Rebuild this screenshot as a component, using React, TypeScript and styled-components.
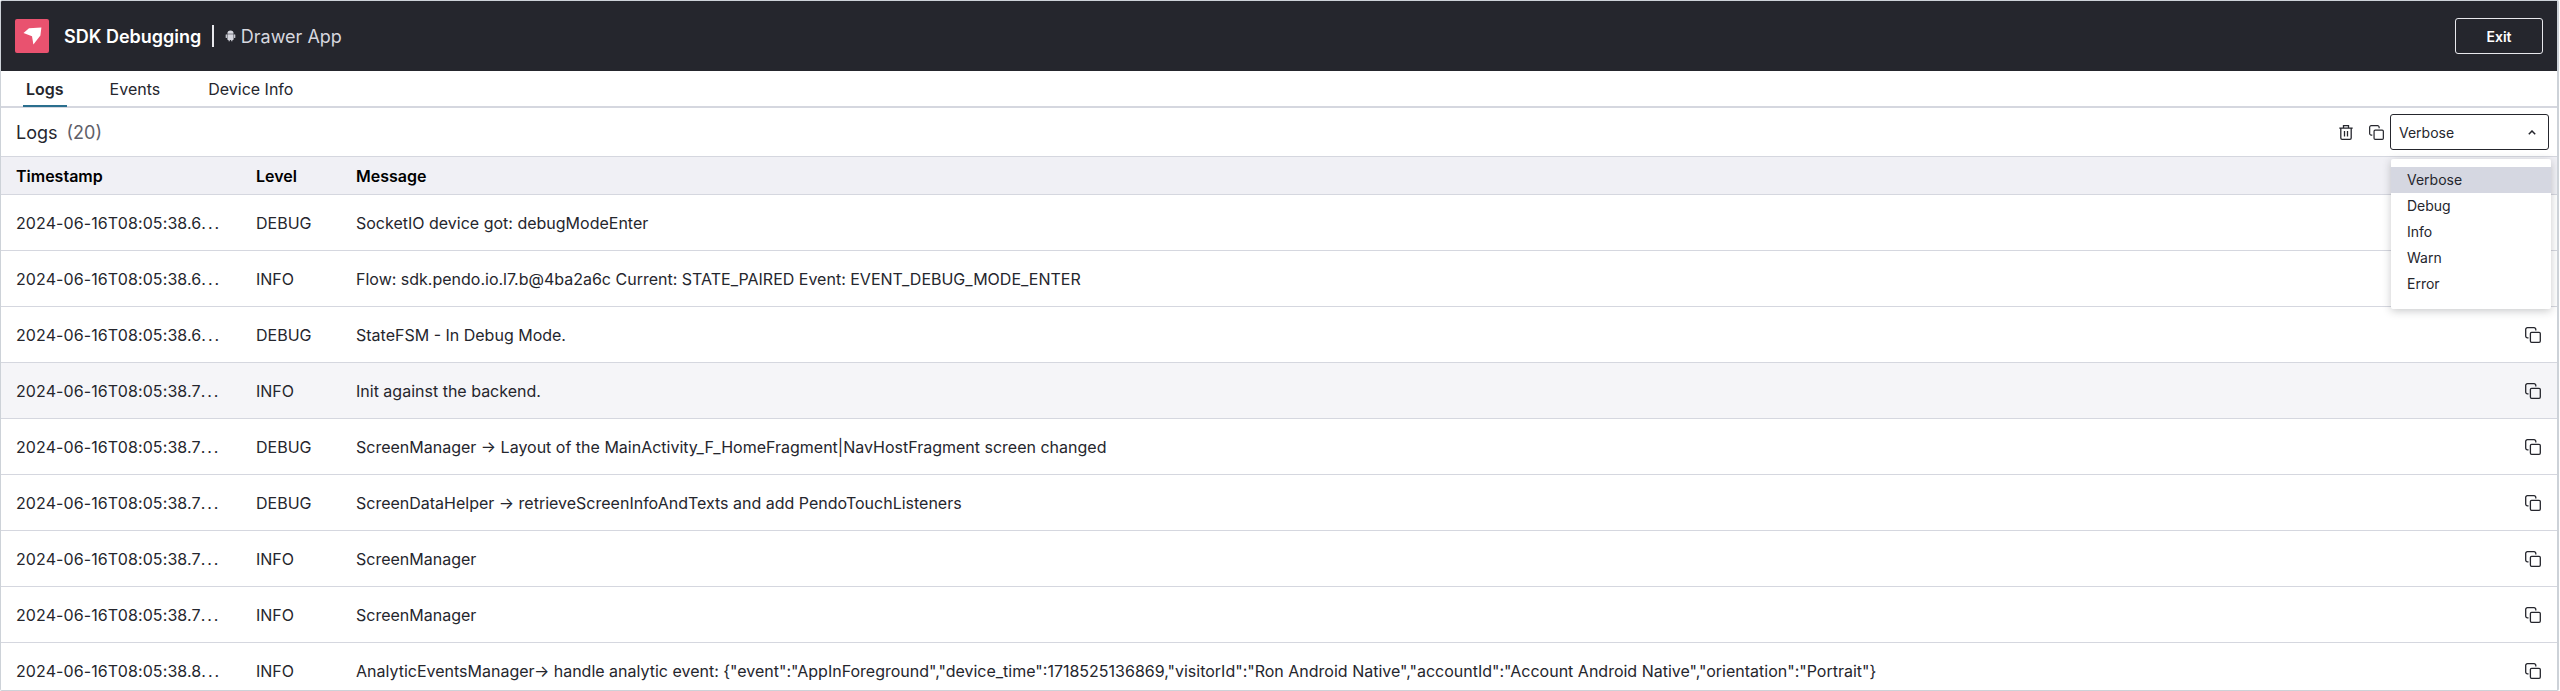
import React from "react";
import styled, { createGlobalStyle } from "styled-components";

const GlobalStyle = createGlobalStyle`
  html, body {
    margin: 0;
    padding: 0;
    background: #ffffff;
  }
  body {
    font-family: Inter, "Liberation Sans", sans-serif;
    color: #25262d;
  }
  * {
    box-sizing: border-box;
  }
`;

const Frame = styled.div`
  position: relative;
  width: 2559px;
  height: 691px;
  overflow: hidden;
  border: 1px solid #cdd2d8;
  border-right-width: 2px;
  border-radius: 2px;
`;

const Header = styled.header`
  display: flex;
  align-items: center;
  justify-content: space-between;
  height: 70px;
  padding: 0 14px 0 14px;
  background: #25262d;
`;

const Brand = styled.div`
  display: flex;
  align-items: center;
`;

const Logo = styled.svg`
  width: 34px;
  height: 34px;
  margin-right: 15px;
`;

const Title = styled.span`
  font-size: 18px;
  font-weight: 600;
  color: #ffffff;
`;

const Divider = styled.span`
  width: 1.5px;
  height: 22px;
  margin: 0 11px;
  background: #e8e8ec;
`;

const Platform = styled.span`
  display: flex;
  align-items: center;
  gap: 5px;
  font-size: 18px;
  color: #d6d7df;
`;

const ExitButton = styled.button`
  width: 88px;
  height: 36px;
  border: 1px solid #e8e8ec;
  border-radius: 3px;
  background: transparent;
  color: #ffffff;
  font: 600 14px Inter, sans-serif;
`;

const Tabs = styled.nav`
  display: flex;
  height: 37px;
  padding-left: 22px;
  border-bottom: 2px solid #d5d7df;
`;

const Tab = styled.div<{ $active?: boolean }>`
  height: 36px;
  margin-right: 40px;
  padding: 0 3px;
  font-size: 16px;
  line-height: 36px;
  font-weight: ${(p) => (p.$active ? 600 : 400)};
  border-bottom: 2px solid ${(p) => (p.$active ? "#2a6f8e" : "transparent")};

  &:nth-child(2) {
    margin-right: 42px;
  }
`;

const Toolbar = styled.div`
  display: flex;
  align-items: center;
  justify-content: space-between;
  height: 48px;
  padding: 0 8px 0 15px;
`;

const Heading = styled.div`
  font-size: 18px;
  color: #25262d;
`;

const Count = styled.span`
  margin-left: 9px;
  color: #5f6069;
`;

const ToolbarActions = styled.div`
  display: flex;
  align-items: center;
`;

const IconButton = styled.span`
  display: flex;
  margin-right: 16px;

  &:last-of-type {
    margin-right: 6px;
  }
`;

const Select = styled.div`
  display: flex;
  align-items: center;
  justify-content: space-between;
  width: 159px;
  height: 36px;
  padding: 0 12px 0 8px;
  border: 1px solid #25262d;
  border-radius: 3px;
  font-size: 14px;
`;

const Menu = styled.ul`
  position: absolute;
  top: 158px;
  right: 6px;
  width: 160px;
  margin: 0;
  padding: 8px 0 12px;
  list-style: none;
  background: #ffffff;
  border-radius: 2px;
  box-shadow: 0 2px 8px rgba(37, 38, 45, 0.25);
  z-index: 2;
`;

const MenuItem = styled.li<{ $selected?: boolean }>`
  height: 26px;
  padding-left: 16px;
  font-size: 14px;
  line-height: 26px;
  background: ${(p) => (p.$selected ? "#d5d7e1" : "transparent")};
`;

const Row = styled.div`
  display: grid;
  grid-template-columns: 240px 100px 1fr 32px;
  align-items: center;
  height: 56px;
  padding-left: 15px;
  font-size: 16px;
  color: #25262d;
  background: #ffffff;
  border-top: 1px solid #d5d7df;
`;

const HeadRow = styled(Row)`
  height: 38px;
  font-weight: 600;
  color: #000000;
  background: #f0f0f5;
`;

const HoverRow = styled(Row)`
  background: #f5f5f8;
`;

const Stamp = styled.span`
  letter-spacing: 0.1px;
  white-space: nowrap;
`;

const Dots = styled.span`
  letter-spacing: 2px;
`;

const Message = styled.span`
  white-space: nowrap;
`;

const CopyIcon = ({ size = 16 }: { size?: number }) => (
  <svg width={size} height={size} viewBox="0 0 16 16" fill="none" stroke="#25262d" strokeWidth="1.3">
    <path d="M3.5 10.8H2.4A1.7 1.7 0 0 1 .7 9.1V2.4A1.7 1.7 0 0 1 2.4 .7H9.1A1.7 1.7 0 0 1 10.8 2.4V3.5" />
    <rect x="5.4" y="5.4" width="9.9" height="9.9" rx="1.2" />
  </svg>
);

const TrashIcon = () => (
  <svg width="14" height="15" viewBox="0 0 14 15" fill="none" stroke="#25262d" strokeWidth="1.3">
    <path d="M.3 3.2H13.7M4.5 3.2V.7H9.5V3.2M1.8 3.2V13A1.3 1.3 0 0 0 3.1 14.3H10.9A1.3 1.3 0 0 0 12.2 13V3.2M5.5 6V11.5M8.5 6V11.5" />
  </svg>
);

const AndroidIcon = () => (
  <svg width="11" height="12" viewBox="0 0 11 12" fill="#d6d7df">
    <path d="M2.4 3.7A3.1 3.1 0 0 1 8.6 3.7ZM2.4 4.3H8.6V9.3A.6.6 0 0 1 8 9.9H7.4V11.3H6.2V9.9H4.8V11.3H3.6V9.9H3A.6.6 0 0 1 2.4 9.3Z" />
    <rect x="0.7" y="4.3" width="1.2" height="3.8" rx="0.6" />
    <rect x="9.1" y="4.3" width="1.2" height="3.8" rx="0.6" />
  </svg>
);

const logs = [
  ["2024-06-16T08:05:38.6", "DEBUG", "SocketIO device got: debugModeEnter"],
  ["2024-06-16T08:05:38.6", "INFO", "Flow: sdk.pendo.io.l7.b@4ba2a6c Current: STATE_PAIRED Event: EVENT_DEBUG_MODE_ENTER"],
  ["2024-06-16T08:05:38.6", "DEBUG", "StateFSM - In Debug Mode."],
  ["2024-06-16T08:05:38.7", "INFO", "Init against the backend."],
  ["2024-06-16T08:05:38.7", "DEBUG", "ScreenManager → Layout of the MainActivity_F_HomeFragment|NavHostFragment screen changed"],
  ["2024-06-16T08:05:38.7", "DEBUG", "ScreenDataHelper → retrieveScreenInfoAndTexts and add PendoTouchListeners"],
  ["2024-06-16T08:05:38.7", "INFO", "ScreenManager"],
  ["2024-06-16T08:05:38.7", "INFO", "ScreenManager"],
  [
    "2024-06-16T08:05:38.8",
    "INFO",
    'AnalyticEventsManager→ handle analytic event: {"event":"AppInForeground","device_time":1718525136869,"visitorId":"Ron Android Native","accountId":"Account Android Native","orientation":"Portrait"}',
  ],
];

const levels = ["Verbose", "Debug", "Info", "Warn", "Error"];

const App = () => (
  <Frame>
    <GlobalStyle />
    <Header>
      <Brand>
        <Logo viewBox="0 0 34 34">
          <rect width="34" height="34" rx="2" fill="#e9526f" />
          <path d="M8.5 14L14 9.2L26.4 8.5L25.4 16.5L18.4 25.5L17 17.3Z" fill="#ffffff" />
        </Logo>
        <Title>SDK Debugging</Title>
        <Divider />
        <Platform>
          <AndroidIcon />
          Drawer App
        </Platform>
      </Brand>
      <ExitButton>Exit</ExitButton>
    </Header>
    <Tabs>
      <Tab $active>Logs</Tab>
      <Tab>Events</Tab>
      <Tab>Device Info</Tab>
    </Tabs>
    <Toolbar>
      <Heading>
        Logs<Count>(20)</Count>
      </Heading>
      <ToolbarActions>
        <IconButton>
          <TrashIcon />
        </IconButton>
        <IconButton>
          <CopyIcon size={15} />
        </IconButton>
        <Select>
          Verbose
          <svg width="8" height="5" viewBox="0 0 8 5" fill="none" stroke="#25262d" strokeWidth="1.5">
            <path d="M.8 4.2L4 1L7.2 4.2" />
          </svg>
        </Select>
      </ToolbarActions>
    </Toolbar>
    <Menu>
      {levels.map((level, i) => (
        <MenuItem key={level} $selected={i === 0}>
          {level}
        </MenuItem>
      ))}
    </Menu>
    <HeadRow>
      <span>Timestamp</span>
      <span>Level</span>
      <span>Message</span>
    </HeadRow>
    {logs.map(([time, level, message], i) => {
      const LogRow = i === 3 ? HoverRow : Row;
      return (
        <LogRow key={i}>
          <Stamp>
            {time}
            <Dots>...</Dots>
          </Stamp>
          <span>{level}</span>
          <Message>{message}</Message>
          <CopyIcon />
        </LogRow>
      );
    })}
  </Frame>
);

export default App;
